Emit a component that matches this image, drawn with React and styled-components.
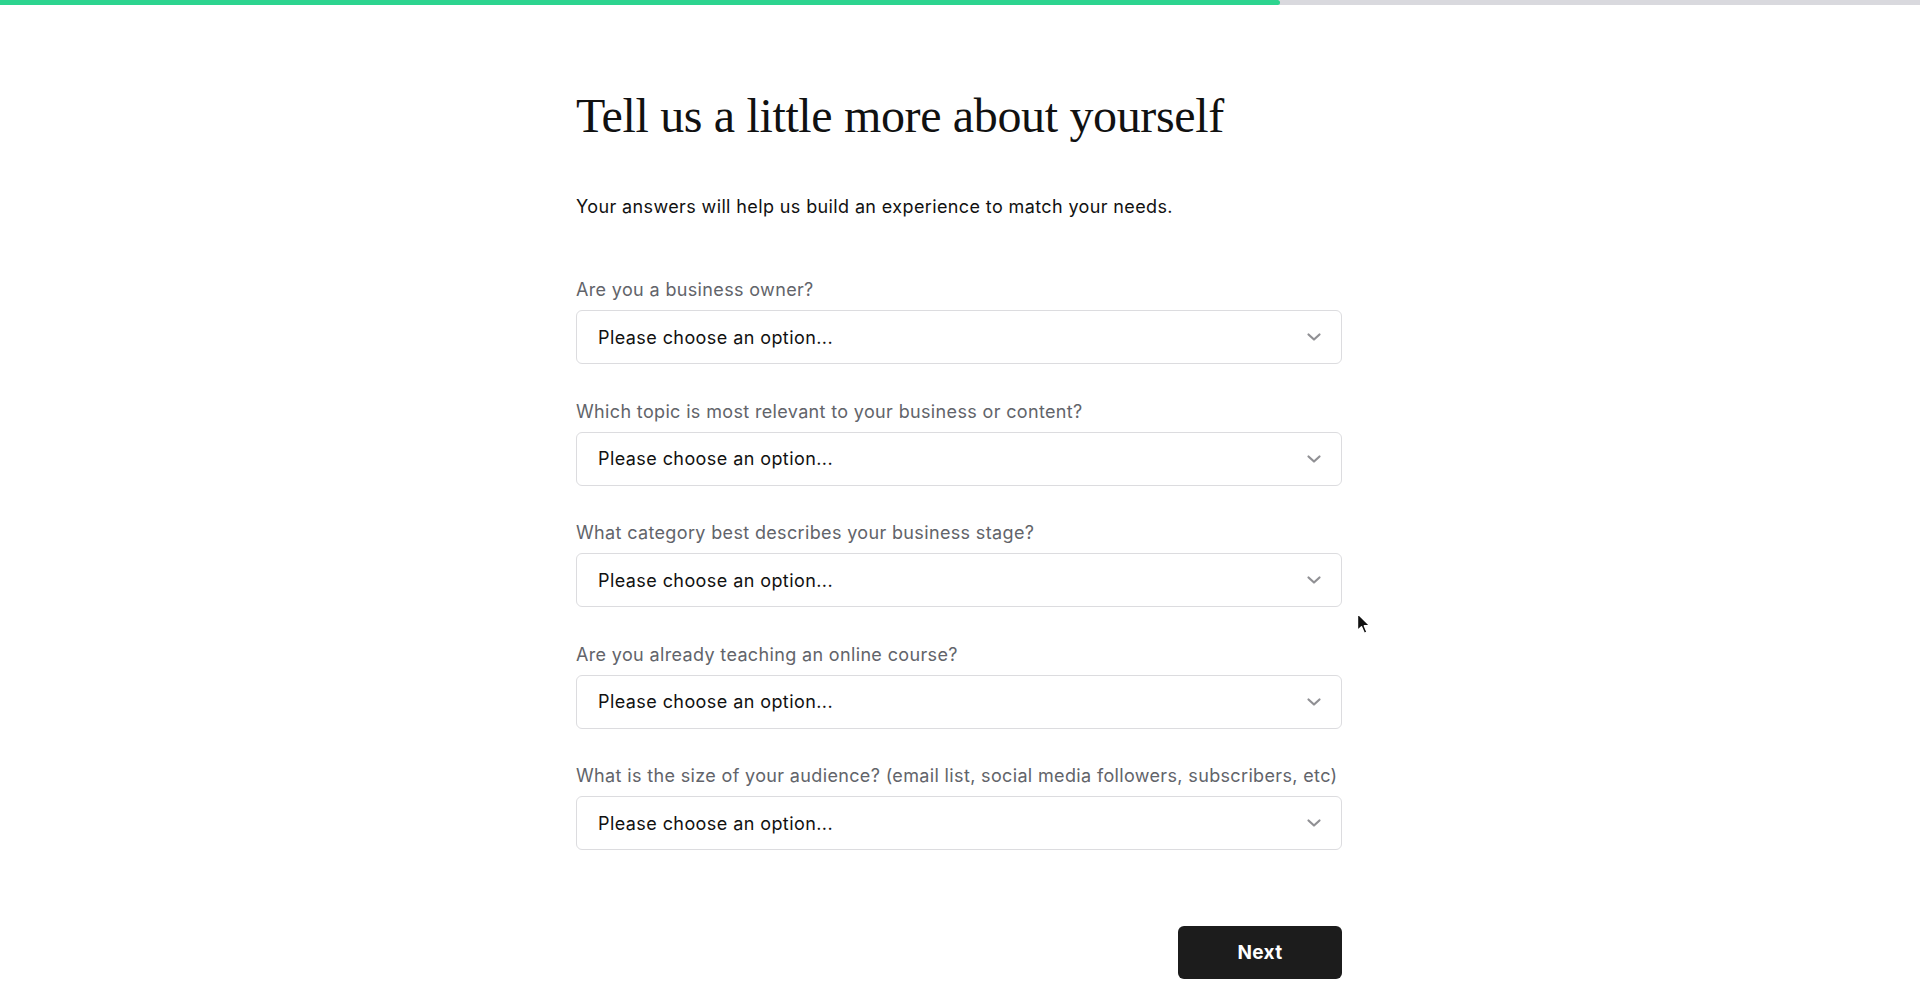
import React from "react";
import styled, { createGlobalStyle } from "styled-components";

const Global = createGlobalStyle`
  html, body { margin: 0; padding: 0; background: #ffffff; }
  body { font-family: Inter, "Noto Sans", "Liberation Sans", sans-serif; color: #111; }
  * { box-sizing: border-box; }
`;

const Page = styled.div`
  position: relative;
  min-height: 984px;
  background: #fff;
  padding-right: 2px;
`;

const Progress = styled.div`
  height: 5px;
  margin-right: -2px;
  background: #d9d9de;
  display: flex;
`;

const ProgressFill = styled.div`
  height: 100%;
  background: #2dd48f;
  border-radius: 0 3px 3px 0;
`;

const Container = styled.main`
  width: 766px;
  margin: 0 auto;
  padding-top: 82px;
  display: flex;
  flex-direction: column;
`;

const Title = styled.h1`
  margin: 0;
  font-family: "Liberation Serif", "DejaVu Serif", serif;
  font-weight: 400;
  font-size: 48px;
  line-height: 57.6px;
  color: #111;
  letter-spacing: -0.35px;
`;

const Subtitle = styled.p`
  margin: 50px 0 0;
  font-size: 18px;
  line-height: 24px;
  letter-spacing: 0.38px;
  color: #111;
`;

const Form = styled.div`
  margin-top: 59.5px;
  display: flex;
  flex-direction: column;
  gap: 35.5px;
`;

const Field = styled.div`
  display: flex;
  flex-direction: column;
  gap: 8px;
`;

const Label = styled.label`
  font-size: 18px;
  line-height: 24px;
  letter-spacing: 0.35px;
  color: #62646a;
`;

const SelectBox = styled.div`
  height: 54px;
  border: 1px solid #dcdcdf;
  border-radius: 6px;
  background: #fff;
  display: flex;
  align-items: center;
  justify-content: space-between;
  padding: 0 19px 0 21px;
  font-size: 18px;
  letter-spacing: 0.42px;
  color: #111;
  cursor: pointer;
`;

const Chevron = styled.svg`
  width: 16px;
  height: 10px;
  flex: none;
`;

const Actions = styled.div`
  display: flex;
  justify-content: flex-end;
  margin-top: 76px;
`;

const NextButton = styled.button`
  width: 164px;
  height: 53px;
  border: none;
  border-radius: 6px;
  background: #1c1c1c;
  color: #fff;
  font-family: Inter, "Noto Sans", sans-serif;
  font-size: 19px;
  letter-spacing: 0.3px;
  font-weight: 700;
  cursor: pointer;
`;

const Cursor = styled.svg`
  position: absolute;
  left: 1356px;
  top: 612px;
  width: 16px;
  height: 24px;
`;

const questions = [
  "Are you a business owner?",
  "Which topic is most relevant to your business or content?",
  "What category best describes your business stage?",
  "Are you already teaching an online course?",
  "What is the size of your audience? (email list, social media followers, subscribers, etc)",
];

export default function App() {
  return (
    <Page>
      <Global />
      <Progress>
        <ProgressFill style={{ width: "1280px" }} />
      </Progress>
      <Container>
        <Title>Tell us a little more about yourself</Title>
        <Subtitle>Your answers will help us build an experience to match your needs.</Subtitle>
        <Form>
          {questions.map((q) => (
            <Field key={q}>
              <Label>{q}</Label>
              <SelectBox>
                <span>Please choose an option...</span>
                <Chevron viewBox="0 0 16 10">
                  <path d="M2.5 2.5 L8 7.5 L13.5 2.5" fill="none" stroke="#909094" strokeWidth="2.2" strokeLinecap="round" strokeLinejoin="round" />
                </Chevron>
              </SelectBox>
            </Field>
          ))}
        </Form>
        <Actions>
          <NextButton>Next</NextButton>
        </Actions>
      </Container>
      <Cursor viewBox="0 0 16 24">
        <path d="M1.5 1.5 L1.5 18.5 L5.5 14.8 L8.3 21.3 L11 20.1 L8.3 13.8 L13.6 13.6 Z" fill="#111" stroke="#fff" strokeWidth="1.4" strokeLinejoin="round" />
      </Cursor>
    </Page>
  );
}
